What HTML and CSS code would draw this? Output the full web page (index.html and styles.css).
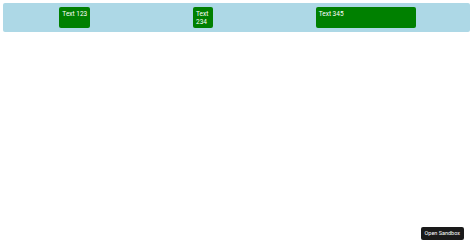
FILE: index.html
```html
<!DOCTYPE html>
<html lang="en">
<head>
    <meta charset="UTF-8">
    <meta name="viewport" content="width=device-width, initial-scale=1.0">
    <title>Flex Items</title>
    <link rel="stylesheet" href="styles.css">
</head>
<body>
    <div class="bar">
        <div class="item item-a">Text 123</div>
        <div class="item item-b">Text 234</div>
        <div class="item item-c">Text 345</div>
    </div>

    <button class="sandbox-btn">Open Sandbox</button>
</body>
</html>
```

FILE: styles.css
```css
* {
    box-sizing: border-box;
}

body {
    margin: 3px;
    font-family: Roboto, "Liberation Sans", sans-serif;
}

.bar {
    display: flex;
    justify-content: space-around;
    align-items: flex-start;
    width: 467px;
    padding: 4px 3px 4px 5px;
    background-color: lightblue;
    border-radius: 2px;
}

.item {
    height: 21px;
    padding: 3px 3px;
    background-color: green;
    color: white;
    font-size: 6.5px;
    line-height: 8px;
    border-radius: 2px;
}

.item-a {
    width: 31px;
    white-space: nowrap;
}

.item-b {
    width: 20px;
}

.item-c {
    width: 100px;
}

.sandbox-btn {
    position: fixed;
    right: 10px;
    bottom: 8px;
    padding: 3px 4px;
    border: none;
    border-radius: 2px;
    background: #1a1a1a;
    color: #fff;
    font-family: Roboto, "Liberation Sans", sans-serif;
    font-size: 5.5px;
    line-height: 7px;
}
```
